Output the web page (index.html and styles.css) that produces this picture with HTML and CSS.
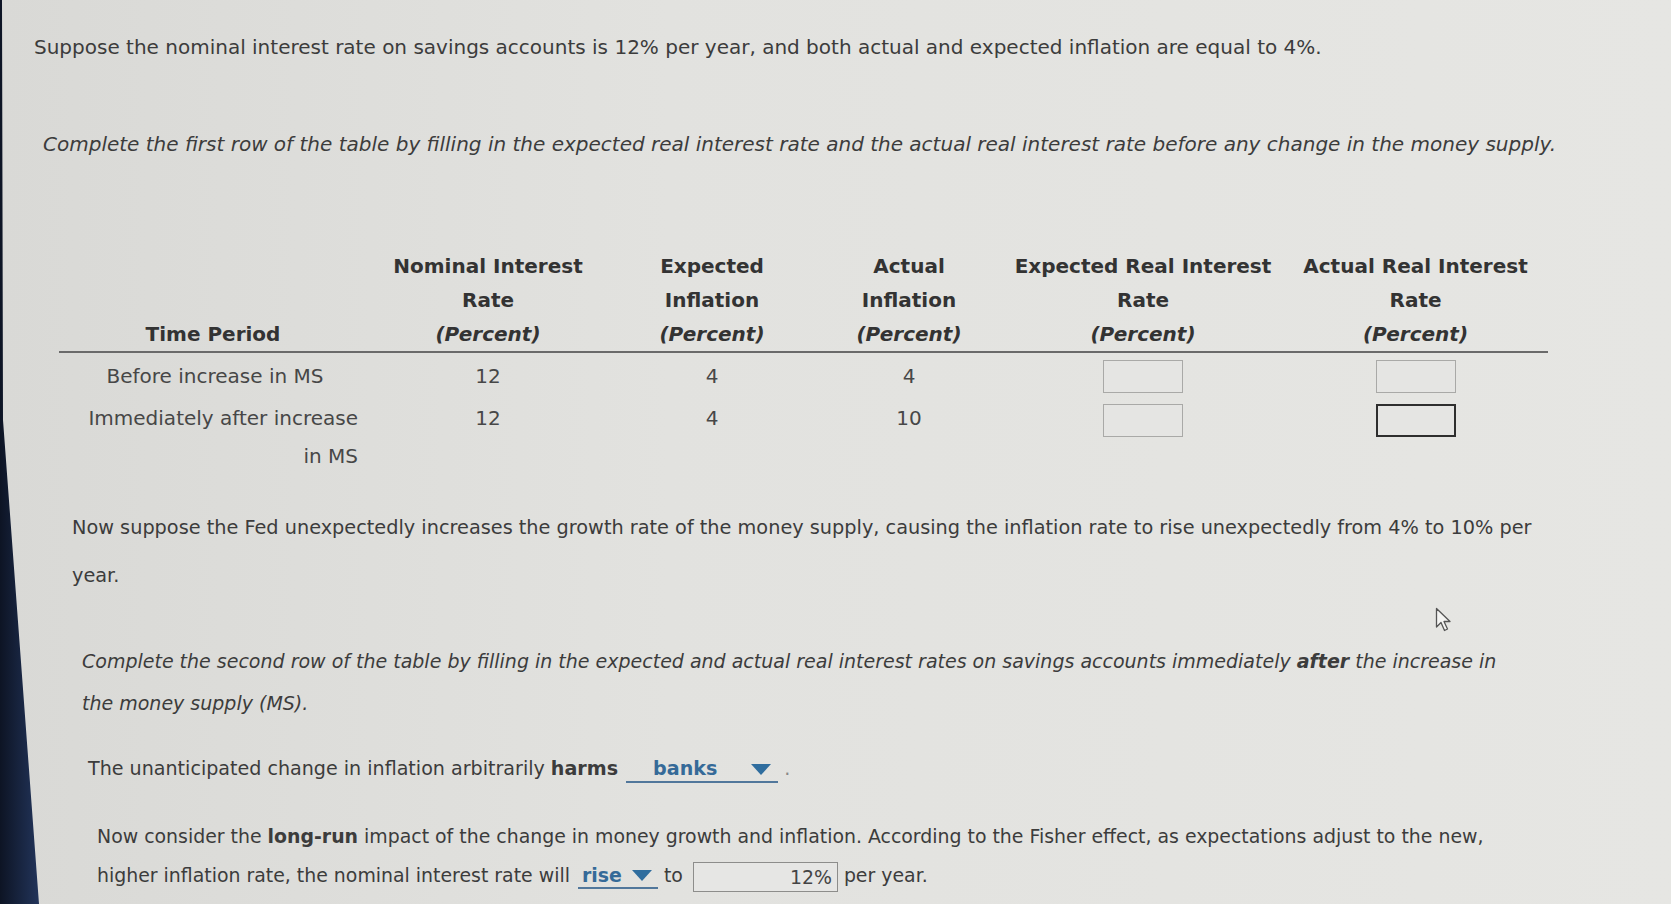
FILE: index.html
```html
<!DOCTYPE html>
<html>
<head>
<meta charset="utf-8">
<link rel="stylesheet" href="styles.css">
</head>
<body>
<div class="page">
  <p class="p1">Suppose the nominal interest rate on savings accounts is 12% per year, and both actual and expected inflation are equal to 4%.</p>
  <p class="p2">Complete the first row of the table by filling in the expected real interest rate and the actual real interest rate before any change in the money supply.</p>

  <table class="tbl">
    <colgroup>
      <col class="c1"><col class="c2"><col class="c3"><col class="c4"><col class="c5"><col class="c6">
    </colgroup>
    <thead>
      <tr>
        <th>Time Period</th>
        <th>Nominal Interest<br>Rate<br><em>(Percent)</em></th>
        <th>Expected<br>Inflation<br><em>(Percent)</em></th>
        <th>Actual<br>Inflation<br><em>(Percent)</em></th>
        <th>Expected Real Interest<br>Rate<br><em>(Percent)</em></th>
        <th>Actual Real Interest<br>Rate<br><em>(Percent)</em></th>
      </tr>
    </thead>
    <tbody>
      <tr class="r1">
        <td class="period">Before increase in MS</td>
        <td>12</td>
        <td>4</td>
        <td>4</td>
        <td><span class="box"></span></td>
        <td><span class="box"></span></td>
      </tr>
      <tr class="r2">
        <td class="period"><span class="pl">Immediately after increase</span><span class="pl">in MS</span></td>
        <td>12</td>
        <td>4</td>
        <td>10</td>
        <td><span class="box"></span></td>
        <td><span class="box focus"></span></td>
      </tr>
    </tbody>
  </table>

  <p class="p3">Now suppose the Fed unexpectedly increases the growth rate of the money supply, causing the inflation rate to rise unexpectedly from 4% to 10% per<br>year.</p>

  <p class="p4">Complete the second row of the table by filling in the expected and actual real interest rates on savings accounts immediately <b>after</b> the increase in<br>the money supply (MS).</p>

  <p class="p5">The unanticipated change in inflation arbitrarily <b>harms</b> <span class="dd dd-banks"><span class="ddtext">banks</span><svg class="tri" width="20" height="11" viewBox="0 0 20 11"><polygon points="0,0 20,0 10,11" fill="#2f6d9e"/></svg></span> <span class="dot">.</span></p>

  <p class="p6">Now consider the <b>long-run</b> impact of the change in money growth and inflation. According to the Fisher effect, as expectations adjust to the new,<br>higher inflation rate, the nominal interest rate will <span class="dd dd-rise"><span class="ddtext">rise</span><svg class="tri" width="20" height="11" viewBox="0 0 20 11"><polygon points="0,0 20,0 10,11" fill="#2f6d9e"/></svg></span> to <span class="numbox">12%</span> per year.</p>
</div>

<svg class="bezel" width="40" height="904" viewBox="0 0 40 904">
  <defs>
    <linearGradient id="bz" x1="0" y1="0" x2="1" y2="0">
      <stop offset="0" stop-color="#0d1424"/>
      <stop offset="1" stop-color="#22345a"/>
    </linearGradient>
  </defs>
  <polygon points="0,0 2,0 3,420 39,904 0,904" fill="url(#bz)"/>
</svg>

<svg class="cursor" width="18" height="26" viewBox="0 0 18 26">
  <path d="M1.5 1.5 L1.5 20 L6 15.5 L9.5 23.5 L12.5 22 L9 14.5 L15 14.5 Z" fill="#f4f4f2" stroke="#555" stroke-width="1.3" stroke-linejoin="round"/>
</svg>
</body>
</html>
```
FILE: styles.css
```css
html, body {
  margin: 0;
  padding: 0;
}
body {
  width: 1671px;
  height: 904px;
  overflow: hidden;
  background: linear-gradient(90deg, #d9d9d6 0%, #e2e2df 40%, #e6e6e3 100%);
  font-family: "DejaVu Sans", Verdana, sans-serif;
  font-size: 20px;
  color: #3c3c3c;
  position: relative;
}
.page {
  padding-top: 30px;
}
p {
  margin: 0;
}
.p1 {
  margin-left: 34px;
  line-height: 34px;
}
.p2 {
  margin-left: 43px;
  margin-top: 63px;
  line-height: 34px;
  font-style: italic;
}
.tbl {
  margin-left: 59px;
  margin-top: 88px;
  border-collapse: collapse;
  table-layout: fixed;
  width: 1489px;
}
.c1 { width: 308px; }
.c2 { width: 242px; }
.c3 { width: 206px; }
.c4 { width: 188px; }
.c5 { width: 280px; }
.c6 { width: 265px; }
.tbl th {
  font-weight: bold;
  line-height: 34px;
  vertical-align: bottom;
  padding: 0;
  border-bottom: 2px solid #6a6a6a;
  color: #333;
  text-align: center;
}
.tbl th em {
  font-style: italic;
}
.tbl td {
  text-align: center;
  padding: 0;
  color: #474747;
}
.r1 td {
  height: 46px;
  vertical-align: middle;
}
.r2 td {
  vertical-align: top;
  line-height: 38px;
}
.period .pl {
  display: block;
  text-align: right;
  padding-right: 9px;
}
.r1 .period {
  padding-left: 4px;
}
.box {
  display: inline-block;
  width: 78px;
  height: 31px;
  border: 1px solid #a9a9a7;
  background: #e5e5e3;
  vertical-align: middle;
}
.r2 .box {
  margin-top: 2px;
}
.box.focus {
  border: 2px solid #2e2e2e;
  width: 76px;
  height: 29px;
}
.p3 {
  margin-left: 72px;
  margin-top: 29px;
  width: 1500px;
  line-height: 48px;
  font-size: 19.3px;
}
.p4 {
  margin-left: 82px;
  margin-top: 40px;
  width: 1480px;
  line-height: 42px;
  font-style: italic;
  font-size: 19px;
}
.p4 b {
  font-style: italic;
}
.p5 {
  margin-left: 88px;
  margin-top: 25px;
  line-height: 40px;
  font-size: 19.1px;
}
.dd {
  display: inline-flex;
  align-items: center;
  border-bottom: 2px solid #51779b;
  line-height: 24px;
  color: #356a98;
  font-weight: bold;
  vertical-align: baseline;
}
.dd-banks {
  width: 152px;
  margin-left: 2px;
  padding-left: 27px;
  box-sizing: border-box;
}
.dd-banks .tri {
  margin-left: auto;
  margin-right: 7px;
}
.dd-rise {
  width: 80px;
  box-sizing: border-box;
  padding-left: 4px;
  margin-left: 2px;
}
.dd-rise .tri {
  margin-left: auto;
  margin-right: 6px;
}
.dot {
  color: #888;
}
.p6 {
  margin-left: 97px;
  margin-top: 28px;
  width: 1460px;
  line-height: 39px;
  font-size: 18.9px;
}
.numbox {
  display: inline-block;
  width: 145px;
  height: 30px;
  line-height: 28px;
  border: 1px solid #8d8d8b;
  background: #e6e6e4;
  text-align: right;
  padding-right: 5px;
  box-sizing: border-box;
  margin-left: 4px;
  color: #444;
  vertical-align: middle;
}
.bezel {
  position: absolute;
  left: 0;
  top: 0;
}
.cursor {
  position: absolute;
  left: 1435px;
  top: 607px;
}
```
